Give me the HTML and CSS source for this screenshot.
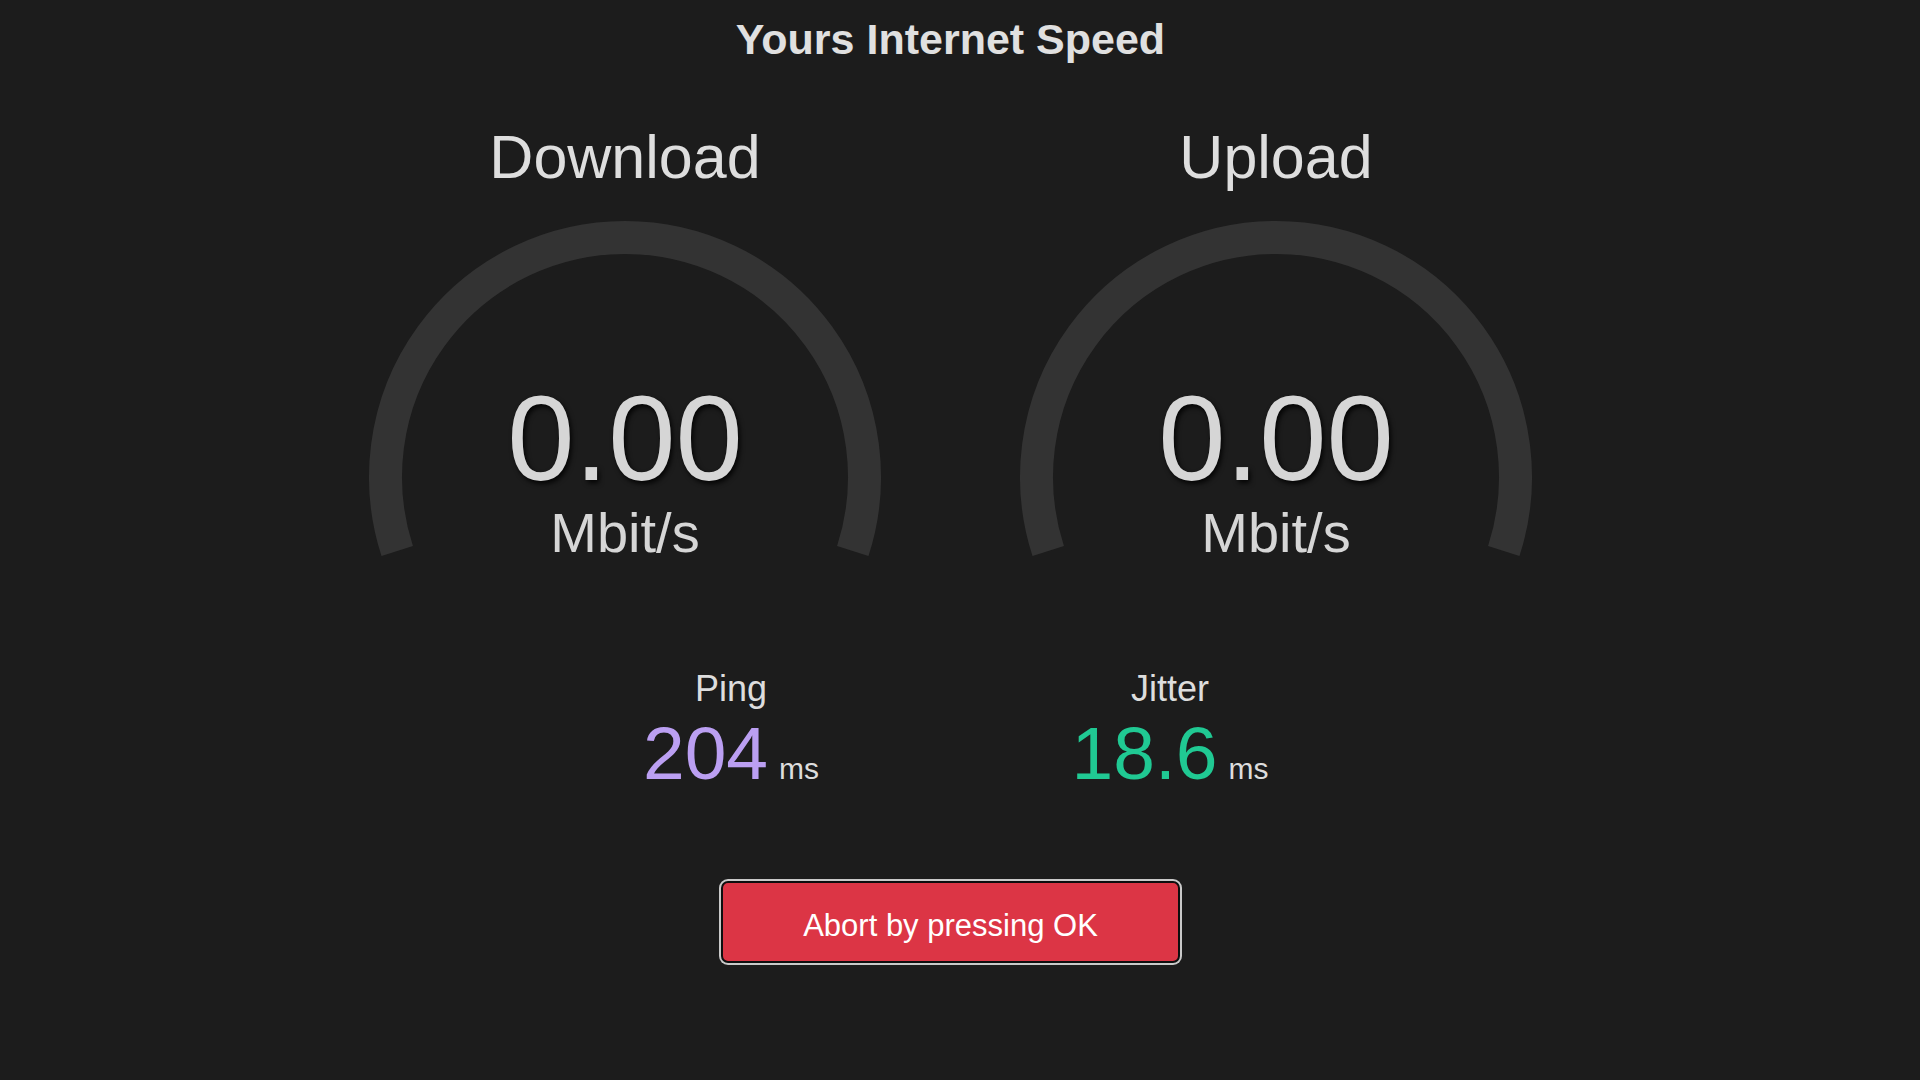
FILE: index.html
```html
<!DOCTYPE html>
<html lang="en">
<head>
<meta charset="utf-8">
<title>Yours Internet Speed</title>
<link rel="stylesheet" href="styles.css">
</head>
<body>
<div class="page">
  <h1 class="title">Yours Internet Speed</h1>
  <div class="gauges">
    <div class="gauge">
      <div class="gauge-label">Download</div>
      <div class="meter">
        <svg class="meter-svg" width="520" height="342" viewBox="0 0 520 342">
          <path d="M 32.22 334.01 A 239.5 239.5 0 1 1 487.78 334.01" fill="none" stroke="#333333" stroke-width="33"/>
        </svg>
        <div class="readout">
          <div class="readout-value">0.00</div>
          <div class="readout-unit">Mbit/s</div>
        </div>
      </div>
    </div>
    <div class="gauge">
      <div class="gauge-label">Upload</div>
      <div class="meter">
        <svg class="meter-svg" width="520" height="342" viewBox="0 0 520 342">
          <path d="M 32.22 334.01 A 239.5 239.5 0 1 1 487.78 334.01" fill="none" stroke="#333333" stroke-width="33"/>
        </svg>
        <div class="readout">
          <div class="readout-value">0.00</div>
          <div class="readout-unit">Mbit/s</div>
        </div>
      </div>
    </div>
  </div>
  <div class="stats">
    <div class="stat">
      <div class="stat-label">Ping</div>
      <div class="stat-value"><span class="num ping">204</span><span class="unit">ms</span></div>
    </div>
    <div class="stat">
      <div class="stat-label">Jitter</div>
      <div class="stat-value"><span class="num jitter">18.6</span><span class="unit">ms</span></div>
    </div>
  </div>
  <div class="actions">
    <button class="abort-btn" type="button">Abort by pressing OK</button>
  </div>
</div>
</body>
</html>
```

FILE: styles.css
```css
html, body {
  margin: 0;
  padding: 0;
  background: #1c1c1c;
}

body {
  font-family: "Liberation Sans", Arial, sans-serif;
  color: #dddddd;
  width: 1920px;
  height: 1080px;
  overflow: hidden;
}

.page {
  width: 1901px;
  text-align: center;
}

.title {
  margin: 0;
  padding-top: 18px;
  font-size: 43px;
  line-height: 1;
  font-weight: bold;
  color: #e0e0e0;
}

.gauges {
  display: flex;
  justify-content: center;
  margin-top: 66px;
}

.gauge {
  width: 651px;
  display: flex;
  flex-direction: column;
  align-items: center;
}

.gauge-label {
  font-size: 61px;
  line-height: 1;
  color: #dedede;
}

.meter {
  position: relative;
  width: 520px;
  height: 342px;
  margin-top: 29px;
}

.meter-svg {
  display: block;
}

.readout {
  position: absolute;
  left: 0;
  right: 0;
  top: 161px;
  text-align: center;
}

.readout-value {
  font-size: 121px;
  line-height: 1;
  color: #d6d6d6;
  text-shadow: 2px 3px 5px rgba(0, 0, 0, 0.85);
}

.readout-unit {
  font-size: 56px;
  line-height: 1;
  margin-top: 6px;
  color: #d6d6d6;
}

.stats {
  display: flex;
  justify-content: center;
  margin-top: 112px;
}

.stat {
  width: 439px;
  display: flex;
  flex-direction: column;
  align-items: center;
}

.stat-label {
  font-size: 36px;
  line-height: 1;
  color: #dddddd;
}

.stat-value {
  margin-top: 9px;
  line-height: 1;
  white-space: nowrap;
}

.num {
  font-size: 75px;
  line-height: 1;
}

.ping {
  color: #bb9ff2;
}

.jitter {
  color: #20c993;
}

.unit {
  font-size: 30px;
  margin-left: 11px;
  color: #dddddd;
}

.actions {
  display: flex;
  justify-content: center;
  margin-top: 90px;
}

.abort-btn {
  width: 459px;
  height: 82px;
  box-sizing: border-box;
  padding: 7px 0 0 0;
  background: #dc3545;
  color: #ffffff;
  font-family: "Liberation Sans", Arial, sans-serif;
  font-size: 31px;
  line-height: 1;
  border: 2px solid #0e0e0e;
  border-radius: 7px;
  box-shadow: 0 0 0 2px #c9c9c9;
  cursor: pointer;
}
```
